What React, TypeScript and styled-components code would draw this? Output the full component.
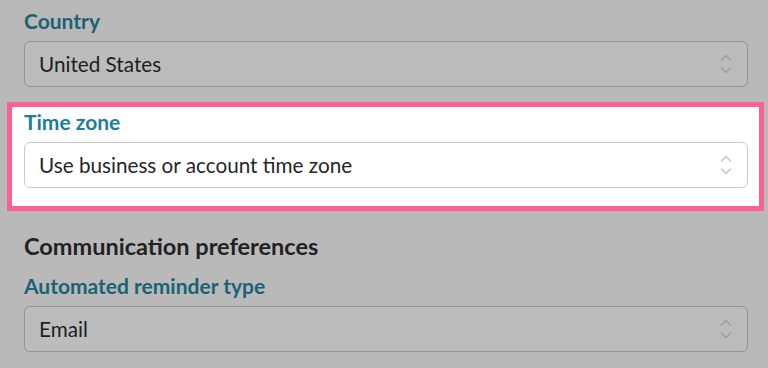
import React from 'react';
import styled, { createGlobalStyle } from 'styled-components';

const GlobalStyle = createGlobalStyle`
  html, body {
    margin: 0;
    padding: 0;
    background: #b9b9b9;
  }
  * {
    box-sizing: border-box;
  }
`;

const Page = styled.div`
  width: 768px;
  height: 368px;
  overflow: hidden;
  display: flex;
  flex-direction: column;
  padding: 7px 20px 0 24px;
  background: #b9b9b9;
  font-family: Lato, 'Noto Sans', sans-serif;
`;

const Field = styled.div<{ $highlight?: boolean }>`
  display: flex;
  flex-direction: column;
  gap: 6px;
  ${p =>
    p.$highlight
      ? `
    margin: 15px -16px 0 -17px;
    padding: 1px 11px 18px 12px;
    background: #ffffff;
    border: 5px solid #fd6190;
  `
      : ''}
`;

const Label = styled.label<{ $dim?: boolean }>`
  font-size: 21px;
  line-height: 28px;
  font-weight: 700;
  color: ${p => (p.$dim ? '#1a6275' : '#1a7f9a')};
`;

const SelectBox = styled.div<{ $dim?: boolean }>`
  height: 46px;
  display: flex;
  align-items: center;
  justify-content: space-between;
  padding: 0 14px;
  border-radius: 6px;
  border: 1px solid ${p => (p.$dim ? '#939393' : '#c9c9c9')};
  background: ${p => (p.$dim ? '#bcbcbc' : '#ffffff')};
  color: ${p => (p.$dim ? '#1e1e1e' : '#262626')};
  font-size: 20.7px;
`;

const Chevrons = styled.svg`
  width: 12px;
  height: 22px;
  flex: none;
  margin-right: 1px;
`;

const SectionTitle = styled.h2`
  margin: 20px 0 11px;
  font-size: 23.5px;
  line-height: 30px;
  font-weight: 700;
  color: #222222;
`;

const Arrows: React.FC<{ dim?: boolean }> = ({ dim }) => (
  <Chevrons viewBox="0 0 12 22" fill="none">
    <path
      d="M1.5 7 L6 2.5 L10.5 7 M1.5 15 L6 19.5 L10.5 15"
      stroke={dim ? '#a0a0a0' : '#c8c8c8'}
      strokeWidth="1.6"
      strokeLinecap="round"
      strokeLinejoin="round"
    />
  </Chevrons>
);

const Select: React.FC<{ value: string; dim?: boolean }> = ({ value, dim }) => (
  <SelectBox $dim={dim}>
    <span>{value}</span>
    <Arrows dim={dim} />
  </SelectBox>
);

export default function App() {
  return (
    <Page>
      <GlobalStyle />
      <Field>
        <Label $dim>Country</Label>
        <Select value="United States" dim />
      </Field>
      <Field $highlight>
        <Label>Time zone</Label>
        <Select value="Use business or account time zone" />
      </Field>
      <SectionTitle>Communication preferences</SectionTitle>
      <Field>
        <Label $dim>Automated reminder type</Label>
        <Select value="Email" dim />
      </Field>
    </Page>
  );
}
